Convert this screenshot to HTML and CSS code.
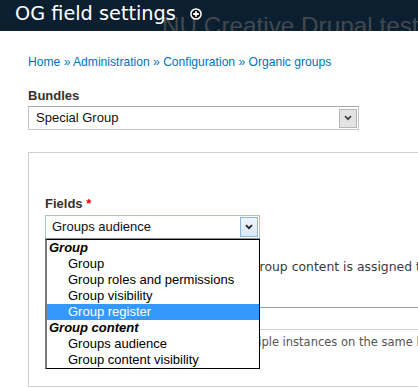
FILE: index.html
```html
<!DOCTYPE html>
<html lang="en">
<head>
<meta charset="utf-8">
<title>OG field settings</title>
<link rel="stylesheet" href="styles.css">
</head>
<body>
<header class="top">
  <div class="sitename">NU Creative Drupal test</div>
  <h1 class="title">OG field settings<span class="shortcut"><svg width="12" height="12" viewBox="0 0 12 12"><circle cx="6" cy="6" r="5.1" fill="#111" stroke="#fff" stroke-width="1.5"/><path d="M6 3.2v5.6M3.2 6h5.6" stroke="#fff" stroke-width="1.8"/></svg></span></h1>
</header>
<main class="page">
  <nav class="crumbs"><a href="#">Home</a> » <a href="#">Administration</a> » <a href="#">Configuration</a> » <a href="#">Organic groups</a></nav>
  <div class="field">
    <label class="label">Bundles</label>
    <div class="select wide">
      <span class="value">Special Group</span>
      <span class="btn"><svg width="8" height="6" viewBox="0 0 8 6"><path d="M1 1.2l3 3 3-3" fill="none" stroke="#444" stroke-width="1.8"/></svg></span>
    </div>
  </div>
  <fieldset class="box">
    <div class="field">
      <label class="label">Fields <span class="req">*</span></label>
      <div class="select-wrap">
        <div class="select narrow focus">
          <span class="value">Groups audience</span>
          <span class="btn"><svg width="8" height="6" viewBox="0 0 8 6"><path d="M1 1.2l3 3 3-3" fill="none" stroke="#222" stroke-width="1.8"/></svg></span>
        </div>
        <ul class="dropdown">
          <li class="group">Group</li>
          <li class="opt">Group</li>
          <li class="opt">Group roles and permissions</li>
          <li class="opt">Group visibility</li>
          <li class="opt selected">Group register</li>
          <li class="group">Group content</li>
          <li class="opt">Groups audience</li>
          <li class="opt">Group content visibility</li>
        </ul>
      </div>
    </div>
    <p class="desc">Group content is assigned to the selected group.</p>
    <div class="rows"></div>
    <p class="desc desc2">multiple instances on the same bundle.</p>
  </fieldset>
</main>
</body>
</html>
```
FILE: styles.css
```css
html, body {
  margin: 0;
  padding: 0;
  overflow: hidden;
  background: #fff;
}
body {
  width: 418px;
  height: 388px;
  font-family: "Liberation Sans", Arial, sans-serif;
  color: #333;
}
.top {
  position: relative;
  height: 31px;
  background: #0c1f30;
  overflow: hidden;
}
.sitename {
  position: absolute;
  left: 162px;
  top: 12px;
  font-family: "Liberation Sans", Arial, sans-serif;
  font-size: 24.3px;
  line-height: 28px;
  color: #41484f;
  white-space: nowrap;
}
.title {
  position: relative;
  margin: 0;
  padding-left: 15px;
  font-family: "DejaVu Sans", sans-serif;
  font-weight: normal;
  font-size: 19.3px;
  line-height: 27px;
  color: #fff;
  display: flex;
  align-items: center;
}
.shortcut {
  display: inline-flex;
  margin-left: 14px;
  margin-top: 1px;
}
.page {
  padding-left: 28px;
}
.crumbs {
  margin-top: 24px;
  font-size: 12.1px;
  line-height: 14px;
  color: #0074bd;
  white-space: nowrap;
}
.crumbs a {
  color: #0074bd;
  text-decoration: none;
}
.label {
  display: block;
  margin-top: 19px;
  font-weight: bold;
  font-size: 13px;
  line-height: 16px;
  color: #333;
}
.req {
  color: #e00;
}
.label + .select {
  margin-top: 2px;
}
.label + .select-wrap {
  margin-top: 3px;
}
.select {
  box-sizing: border-box;
  display: flex;
  align-items: center;
  justify-content: space-between;
  border: 1px solid #c4c4c4;
  border-top-color: #a8a8a8;
  background: #fff;
  font-size: 13px;
}
.select .value {
  line-height: 16px;
  color: #111;
}
.wide {
  width: 331px;
  height: 24px;
  padding: 0 1px 0 7px;
}
.wide .btn {
  box-sizing: border-box;
  width: 18px;
  height: 19px;
  display: flex;
  align-items: center;
  justify-content: center;
  background: #e3e3e3;
  border: 1px solid #b8b8b8;
}
.box {
  box-sizing: border-box;
  width: 520px;
  margin: 22px 0 0 0;
  padding: 43px 0 36px 16px;
  border: 1px solid #cfcfcf;
  border-right: none;
  min-width: 0;
}
.box .label {
  margin-top: 0;
}
.select-wrap {
  position: relative;
  width: 215px;
}
.narrow {
  width: 215px;
  height: 24px;
  padding: 0 1px 0 6px;
  border-color: #a6c4e6;
  border-bottom-color: #8f8f8f;
}
.narrow .btn {
  box-sizing: border-box;
  width: 18px;
  height: 20px;
  display: flex;
  align-items: center;
  justify-content: center;
  background: linear-gradient(#eef5fd, #dbe9f8);
  border: 1px solid #8cb3df;
}
.dropdown {
  position: absolute;
  left: 0;
  top: 100%;
  box-sizing: border-box;
  width: 215px;
  margin: 0;
  padding: 0;
  list-style: none;
  background: #fff;
  border: 1px solid #000;
  border-left: 2px solid #7a7a7a;
  font-size: 13px;
  z-index: 2;
}
.dropdown li {
  height: 16px;
  line-height: 16px;
  color: #000;
  white-space: nowrap;
}
.dropdown .group {
  padding-left: 2px;
  font-weight: bold;
  font-style: italic;
}
.dropdown .opt {
  padding-left: 21px;
}
.dropdown .selected {
  background: #3399ff;
  color: #fff;
}
.desc {
  margin: 20px 0 0 205px;
  font-family: "DejaVu Sans", sans-serif;
  font-size: 12.4px;
  line-height: 16px;
  color: #3a3a3a;
  white-space: nowrap;
}
.rows {
  margin-top: 32px;
  height: 21px;
  border-top: 1px solid #9a9a9a;
  border-bottom: 1px solid #d0d0d0;
}
.desc2 {
  margin: 4px 0 0 187px;
  font-size: 11.5px;
  color: #555;
}
```
